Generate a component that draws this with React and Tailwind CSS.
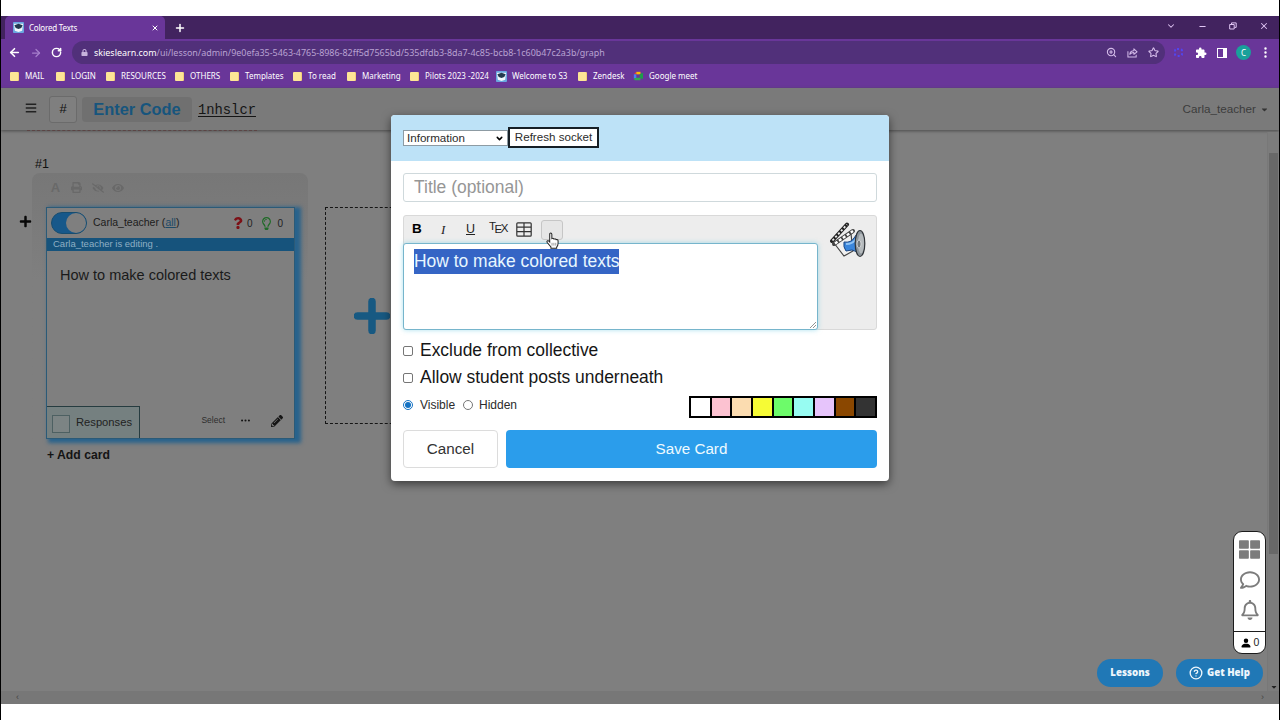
import { ArrowLeft, ArrowRight, ChevronDown, CircleQuestionMark, Minus, Plus, RotateCw, Star, X, ZoomIn } from "lucide-react";
import { FaBars, FaCaretDown, FaEye, FaEyeSlash, FaLock, FaPencilAlt, FaPlus, FaPrint, FaQuestion, FaRegBell, FaRegComment, FaRegLightbulb, FaThLarge } from "react-icons/fa";
import { BsPersonFill, BsThreeDots, BsThreeDotsVertical } from "react-icons/bs";
import { MdExtension } from "react-icons/md";

const bookmarks = [
  { label: "MAIL", width: "w-[46px]" },
  { label: "LOGIN", width: "w-[50px]" },
  { label: "RESOURCES", width: "w-[69px]" },
  { label: "OTHERS", width: "w-[55px]" },
  { label: "Templates", width: "w-[63px]" },
  { label: "To read", width: "w-[54px]" },
  { label: "Marketing", width: "w-[63px]" },
  { label: "Pilots 2023 -2024", width: "w-[87px]" },
  { label: "Welcome to S3", width: "w-[81px]", icon: "site" },
  { label: "Zendesk", width: "w-[56px]" },
  { label: "Google meet", width: "w-[70px]", icon: "meet" },
];

const swatches = [
  "bg-white",
  "bg-[#fcc2d1]",
  "bg-[#fbdcb0]",
  "bg-[#f6fb35]",
  "bg-[#6dfb6a]",
  "bg-[#97fcf2]",
  "bg-[#e6c4fb]",
  "bg-[#8a4700]",
  "bg-[#333333]",
];

function SiteIcon() {
  return (
    <svg viewBox="0 0 12 12" className="h-[11px] w-[11px] shrink-0">
      <rect width="12" height="12" rx="1" fill="#6aa7df" />
      <path d="M1 2h10L10 9.5 6 11 2 9.500z" fill="#f3f8fc" />
      <path d="M1.500 3.500 6 2l4.500 1.500L9 6.500 6 7.500 3 6.500z" fill="#24394f" />
    </svg>
  );
}

function MeetIcon() {
  return (
    <svg viewBox="0 0 12 12" className="h-[10px] w-[10px] shrink-0">
      <path d="M1 4l3-3v3z" fill="#ea4335" />
      <path d="M4 1h5v3H4z" fill="#fbbc04" />
      <path d="M1 4h3v5H1z" fill="#4285f4" />
      <path d="M4 8h5v3H2L1 9z" fill="#34a853" />
      <path d="M8 4l4-2v8L8 8z" fill="#1e9e4a" />
    </svg>
  );
}

function FolderIcon() {
  return <span className="ml-px h-[9px] w-[8px] shrink-0 rounded-[1px] bg-[#fde596] shadow-[1px_0_0_#f3cf79]" />;
}

function ShareIcon() {
  return (
    <svg viewBox="0 0 12 12" className="h-[11px] w-[11px]" fill="none" stroke="currentColor" strokeWidth="1.100">
      <path d="M1 4.500V11h9V8.500" />
      <path d="M3 8q.5-4 4.500-4V2l3.500 3.200L7.500 8V6Q4.500 6 3 8z" strokeLinejoin="round" />
    </svg>
  );
}

function BrowserChrome() {
  return (
    <div className="h-[72px] shrink-0 bg-[#693699] font-['Noto_Sans'] text-white">
      <div className="flex h-[23px] items-center bg-[#42235f]">
        <div className="ml-1 flex h-full w-[160px] items-center rounded-t-[5px] bg-[#693699] pr-[6px] pl-2">
          <SiteIcon />
          <span className="ml-[5px] text-[8px] tracking-[-0.2px]">Colored Texts</span>
          <X size={8} strokeWidth={3} className="ml-auto" />
        </div>
        <Plus size={12} strokeWidth={3} className="ml-[9px]" />
        <div className="ml-auto flex items-center gap-[22px] pr-[10px] pb-[3px] text-[#e0c5f4]">
          <ChevronDown size={10} strokeWidth={2.5} />
          <Minus size={9} strokeWidth={3} />
          <svg viewBox="0 0 8 8" className="h-2 w-2" fill="none" stroke="currentColor">
            <path d="M.7 2.500h4.500v4.500H.7zM2.500 2.300V.9h4.700v4.500H5.500" />
          </svg>
          <X size={10} strokeWidth={2.5} />
        </div>
      </div>

      <div className="flex h-[27px] items-center">
        <ArrowLeft size={13} strokeWidth={3} className="ml-[7px]" />
        <ArrowRight size={12} strokeWidth={2.5} className="ml-[9px] text-[#a67fcc]" />
        <RotateCw size={11} strokeWidth={3.2} className="ml-[9px]" />
        <div className="ml-[10px] flex h-[23px] w-[1093px] items-center rounded-full bg-[#51307a] pr-[6px] pl-[9px]">
          <FaLock size={7} className="text-[#c7b3dc]" />
          <span className="ml-[6px] pt-px text-[8.930px] text-[#b9a2d2]">
            <span className="text-white">skieslearn.com</span>/ui/lesson/admin/9e0efa35-5463-4765-8986-82ff5d7565bd/535dfdb3-8da7-4c85-bcb8-1c60b47c2a3b/graph
          </span>
          <div className="ml-auto flex items-center gap-[10px] text-[#d4bce9]">
            <ZoomIn size={11} strokeWidth={2.4} />
            <ShareIcon />
            <Star size={11} strokeWidth={2.4} />
          </div>
        </div>
        <span className="ml-[9px] h-[9px] w-[9px] rounded-[3px] border-2 border-dotted border-[#5345ee]" />
        <MdExtension size={12} className="ml-[12px]" />
        <span className="ml-[10px] h-[10px] w-[10px] border border-r-[4px] border-white" />
        <span className="ml-[9px] flex h-[15px] w-[15px] items-center justify-center rounded-full bg-[#1aa09b] text-[8px]">C</span>
        <BsThreeDotsVertical size={13} className="ml-[8px]" />
      </div>

      <div className="flex h-[20px] items-center pl-[8px]">
        {bookmarks.map((b) => (
          <div key={b.label} className={`flex shrink-0 items-center ${b.width}`}>
            <span className="flex w-[16px] shrink-0">
              {b.icon === "site" ? <SiteIcon /> : b.icon === "meet" ? <MeetIcon /> : <FolderIcon />}
            </span>
            <span className="text-[8px] whitespace-nowrap">{b.label}</span>
          </div>
        ))}
      </div>
    </div>
  );
}

function LessonHeader() {
  return (
    <div className="flex h-[42px] items-center bg-[#7a7a7a] pr-[10px] pl-[25px] shadow-[0_1px_3px_#4a4a4a]">
      <FaBars size={12} className="mb-[2px] -ml-px text-[#222]" />
      <div className="ml-[12px] flex h-[27px] w-[28px] items-center justify-center rounded-[3px] border border-[#6b6b6b] bg-[#7f7f7f] text-[13px] text-[#111]">
        #
      </div>
      <div className="ml-[5px] flex h-[25px] w-[110px] items-center justify-center rounded-[4px] bg-[#707070] text-[16.4px] font-bold text-[#17557d]">
        Enter Code
      </div>
      <span className="mt-[4px] ml-[6px] font-['Liberation_Mono'] text-[13.8px] text-[#151515] underline underline-offset-2">1nhslcr</span>
      <span className="ml-auto text-[11.700px] text-[#3c3c3c]">Carla_teacher</span>
      <FaCaretDown size={9} className="ml-[4px] text-[#333]" />
    </div>
  );
}

function LessonCard() {
  return (
    <div className="ml-[14px] flex h-[232px] w-[249px] flex-col border border-[#2b5a77] bg-[#7f7f7f] shadow-[4px_2px_4px_2px_#28628c]">
      <div className="flex h-[30px] items-center pr-[11px] pl-1">
        <span className="flex h-[22px] w-[36px] justify-end rounded-full border border-[#174d70] bg-[#17588a]">
          <span className="h-5 w-5 rounded-full bg-[#7f7f7f]" />
        </span>
        <span className="ml-[6px] pb-px text-[10.500px] text-[#1c1c1c]">
          Carla_teacher (<span className="text-[#1d4a68] underline">all</span>)
        </span>
        <FaQuestion size={12} className="ml-auto text-[#7d1016]" />
        <span className="ml-[3px] text-[10px] text-[#222]">0</span>
        <FaRegLightbulb size={13} className="ml-[8px] text-[#206b28]" />
        <span className="ml-[4px] text-[10px] text-[#222]">0</span>
      </div>
      <div className="flex h-[13px] items-center bg-[#16537c] pl-[6px] text-[9.500px] text-[#8fb0c4]">Carla_teacher is editing .</div>
      <div className="px-[13px] pt-[15px] text-[14.5px] leading-[18px] text-[#1a1a1a]">How to make colored texts</div>
      <div className="mt-auto flex items-end">
        <div className="flex h-[32px] w-[93px] items-center border border-b-0 border-l-0 border-[#263c40] bg-[#758080] pl-[5px]">
          <span className="mt-[2px] h-[18px] w-[18px] border border-[#4d6062] bg-[#7c8484]" />
          <span className="ml-[6px] text-[11.200px] text-[#222]">Responses</span>
        </div>
        <div className="flex h-[31px] flex-1 items-center justify-end pr-[11px] pb-1 text-[#151515]">
          <span className="text-[8.500px] text-[#2d2d2d]">Select</span>
          <BsThreeDots size={11} className="ml-[15px]" />
          <FaPencilAlt size={12} className="ml-[20px]" />
        </div>
      </div>
    </div>
  );
}

function Board() {
  return (
    <div className="flex flex-1 items-start pl-[18px] font-['Liberation_Sans']">
      <FaPlus size={13} className="mt-[83px] shrink-0 text-[#080808]" />
      <div className="w-[276px] shrink-0 pt-[25px]">
        <div className="pl-[3px] text-[12.500px] leading-[14px] text-[#111]">#1</div>
        <div className="mt-[2px] rounded-t-[8px] bg-linear-to-b from-[#777777] to-[#7f7f7f] to-40%">
          <div className="flex h-[34px] items-center gap-[10px] pb-[5px] pl-[18px] text-[#696969]">
            <span className="w-[11px] text-center text-[13px] font-bold">A</span>
            <FaPrint size={11} />
            <FaEyeSlash size={12} />
            <FaEye size={12} className="-ml-[2px]" />
          </div>
          <LessonCard />
        </div>
        <div className="mt-[9px] pl-[15px] text-[12.200px] leading-[14px] font-bold text-[#141414]">+ Add card</div>
      </div>
      <div className="mt-[75px] ml-[17px] flex h-[217px] w-[247px] shrink-0 items-center border border-dashed border-[#151515] pl-[28px]">
        <svg viewBox="0 0 36 36" className="h-9 w-9">
          <path d="M18 3.500v29M3.500 18h29" stroke="#175982" strokeWidth="7.500" strokeLinecap="round" />
        </svg>
      </div>
    </div>
  );
}

function MediaIcon() {
  return (
    <svg viewBox="0 0 36 36" className="h-9 w-9">
      <path d="M4 21 14 34l9-5-2-17z" fill="#f1f1f1" stroke="#444" strokeWidth="1.200" />
      <path d="M2 19 17 2.500" stroke="#222" strokeWidth="4" strokeLinecap="round" />
      <path d="M2.500 18.500 17 2.500" stroke="#eee" strokeWidth="1.800" strokeDasharray="2.200 2" />
      <path d="M4 22 23 9" stroke="#444" strokeWidth="4" strokeLinecap="round" />
      <path d="M5 21.500 23 9" stroke="#fff" strokeWidth="2.300" strokeDasharray="3 1.800" />
      <path d="M14 20q7 1 10-4l5-7 1 25q-4-6-8-6l-6 1q-3-4-2-9z" fill="#3a86dc" stroke="#1c4782" />
      <path d="M16 22q7 0 10-5" stroke="#8fc3f5" strokeWidth="2" fill="none" />
      <ellipse cx="30" cy="21.500" rx="4.800" ry="13" fill="#8d959b" stroke="#303438" strokeWidth="1.200" />
      <ellipse cx="31" cy="21.500" rx="3" ry="10" fill="#b5babd" />
      <ellipse cx="29" cy="22" rx="2" ry="4" fill="#737b80" stroke="#eee" strokeWidth=".7" />
    </svg>
  );
}

function HandCursor() {
  return (
    <svg viewBox="0 0 14 18" className="absolute top-[11px] left-[4px] h-[17px] w-[13px]">
      <path
        d="M4 10V2.200Q4 1 5.100 1T6.300 2.200V7q2-.8 2.300.5 2-.6 2.300.6 2-.5 2.100 1.200V12q0 2.500-1.500 4v1.300H5.300V16L1.300 11.200Q.5 9.800 1.700 9.200 2.800 8.900 4 10.500z"
        fill="white"
        stroke="#222"
        strokeWidth="1.100"
      />
      <path d="M6.500 11.500v3M8.500 11.500v3M10.500 11.500v3" stroke="#666" strokeWidth=".7" />
    </svg>
  );
}

function CheckRow({ label }) {
  return (
    <div className="flex h-[27px] items-center">
      <span className="h-[10px] w-[10px] rounded-[2px] border border-[#767676] bg-white" />
      <span className="ml-[7px] text-[17.450px] text-[#161616]">{label}</span>
    </div>
  );
}

function CardModal() {
  return (
    <div className="absolute top-[27px] left-[390px] h-[366px] w-[498px] rounded-[4px] bg-white font-['Liberation_Sans'] shadow-[0_3px_10px_rgba(0,0,0,0.55)]">
      <div className="flex h-[46px] items-center rounded-t-[4px] bg-[#bde2f7] pl-3 text-[11.600px] text-[#2b2b2b]">
        <div className="flex h-[16px] w-[105px] items-center justify-between border border-[#8d9ba3] bg-white pr-[3px] pl-[3px]">
          Information
          <ChevronDown size={9} strokeWidth={4} className="text-black" />
        </div>
        <button className="mb-[2px] h-[21px] w-[91px] border-2 border-[#161f26] bg-white leading-none whitespace-nowrap">Refresh socket</button>
      </div>

      <div className="px-3 pt-3">
        <div className="flex h-[29px] items-center rounded-[3px] border border-[#cfd9dc] pl-[10px] text-[17.450px] text-[#969696]">Title (optional)</div>

        <div className="mt-[13px] flex h-[115px] rounded-[3px] border border-[#d9d9d9] bg-[#ededed]">
          <div className="-mb-px -ml-px flex w-[415px] flex-col">
            <div className="flex h-[27px] items-center pl-[9px] text-[13px] text-[#222]">
              <span className="w-[27px] font-['Liberation_Sans'] text-[13.500px] font-black text-black">B</span>
              <span className="w-[27px] pl-[2px] font-['Liberation_Serif'] italic">I</span>
              <span className="w-[23px] text-[12.500px] underline">U</span>
              <span className="flex w-[27px] text-[11.500px] tracking-[-1.500px]">
                <span className="-mt-[2px]">T</span>
                <span className="mt-[1px]">E</span>X
              </span>
              <svg viewBox="0 0 16 15" className="h-[15px] w-[16px]" fill="none" stroke="#333" strokeWidth="1.200">
                <rect x=".8" y=".8" width="14.400" height="13.400" rx="1" />
                <path d="M8 1v13M1 5.200h14M1 9.600h14" />
              </svg>
              <span className="relative ml-[9px] h-[20px] w-[22px] rounded-[3px] border border-[#c6c6c6] bg-[#e6e6e6]">
                <HandCursor />
              </span>
            </div>
            <div className="flex flex-1 items-start justify-between rounded-[3px] border border-[#76b5cc] bg-white pt-[5px] pl-[10px] shadow-[0_0_5px_rgba(102,200,225,0.55)]">
              <span className="h-[25px] bg-[#3565c5] text-[17.450px] leading-[25px] whitespace-nowrap text-[#e8f7ff]">How to make colored texts</span>
              <svg viewBox="0 0 6 6" className="mr-px mb-px h-[6px] w-[6px] self-end" stroke="#777" strokeWidth=".8">
                <path d="M0 6 6 0M3 6l3-3" />
              </svg>
            </div>
          </div>
          <div className="pt-[6px] pl-[12px]">
            <MediaIcon />
          </div>
        </div>

        <div className="pt-[7px]">
          <CheckRow label="Exclude from collective" />
          <CheckRow label="Allow student posts underneath" />
        </div>

        <div className="flex h-[28px] items-center text-[12px] text-[#2b2b2b]">
          <span className="flex h-[10px] w-[10px] items-center justify-center rounded-full border border-[#1372c4]">
            <span className="h-[6px] w-[6px] rounded-full bg-[#1372c4]" />
          </span>
          <span className="ml-[7px] w-[43px]">Visible</span>
          <span className="h-[10px] w-[10px] rounded-full border border-[#767676]" />
          <span className="ml-[6px]">Hidden</span>
          <div className="mt-[3px] ml-auto flex h-[22px] w-[188px] border border-black bg-black">
            {swatches.map((color) => (
              <span key={color} className={`flex-1 border border-black ${color}`} />
            ))}
          </div>
        </div>

        <div className="mt-[11px] flex h-[38px] gap-2 text-[15.200px]">
          <button className="w-[95px] rounded-[4px] border border-[#dcdcdc] bg-white text-[#333]">Cancel</button>
          <button className="flex-1 rounded-[4px] bg-[#2b9deb] text-[#eefaff]">Save Card</button>
        </div>
      </div>
    </div>
  );
}

function SideDock() {
  return (
    <div className="absolute top-[443px] left-[1232px] flex h-[123px] w-[33px] flex-col items-center rounded-[9px] border border-[#1c1c1c] bg-white text-[#7c7c7c]">
      <FaThLarge size={21} className="mt-[7px]" />
      <FaRegComment size={20} className="mt-[10px]" />
      <FaRegBell size={20} className="mt-[10px]" />
      <div className="mt-auto flex h-[22px] w-full items-center justify-center gap-[2px] border-t border-[#1c1c1c] text-[10.500px] text-[#222]">
        <BsPersonFill size={12} className="text-black" />0
      </div>
    </div>
  );
}

function HelpButtons() {
  return (
    <div className="absolute top-[571px] left-[1096px] flex h-[28px] gap-[13px] font-['Open_Sans'] text-[9.700px] font-extrabold text-[#eef6fc]">
      <div className="flex w-[66px] items-center justify-center rounded-full bg-[#2078b6]">Lessons</div>
      <div className="flex w-[87px] items-center justify-center gap-[4px] rounded-full bg-[#2078b6]">
        <CircleQuestionMark size={14} strokeWidth={2.300} />
        Get Help
      </div>
    </div>
  );
}

export default function App() {
  return (
    <div className="flex h-[720px] w-[1280px] flex-col overflow-hidden border-x border-black bg-white py-4">
      <BrowserChrome />
      <div className="relative flex flex-1 flex-col bg-[#7f7f7f] font-['Liberation_Sans']">
        <LessonHeader />
        {/* bottom edge of the heading scrolled under the header */}
        <div className="ml-[26px] h-[2px] w-[230px] overflow-hidden">
          <div className="border-t border-dashed border-[#5b4444]" />
        </div>
        <div className="flex flex-1">
          <Board />
          <div className="flex w-[12px] flex-col items-center border-l border-[#787878] bg-[#7c7c7c] pt-[21px]">
            <div className="h-[401px] w-[9px] bg-[#686868]" />
            <FaCaretDown size={8} className="mt-auto text-[#222]" />
          </div>
        </div>
        <div className="flex h-[13px] items-center justify-between bg-[#777777] px-[15px] text-[9px] text-[#444]">
          <span>‹</span>
          <span>›</span>
        </div>
        <CardModal />
        <SideDock />
        <HelpButtons />
      </div>
    </div>
  );
}
